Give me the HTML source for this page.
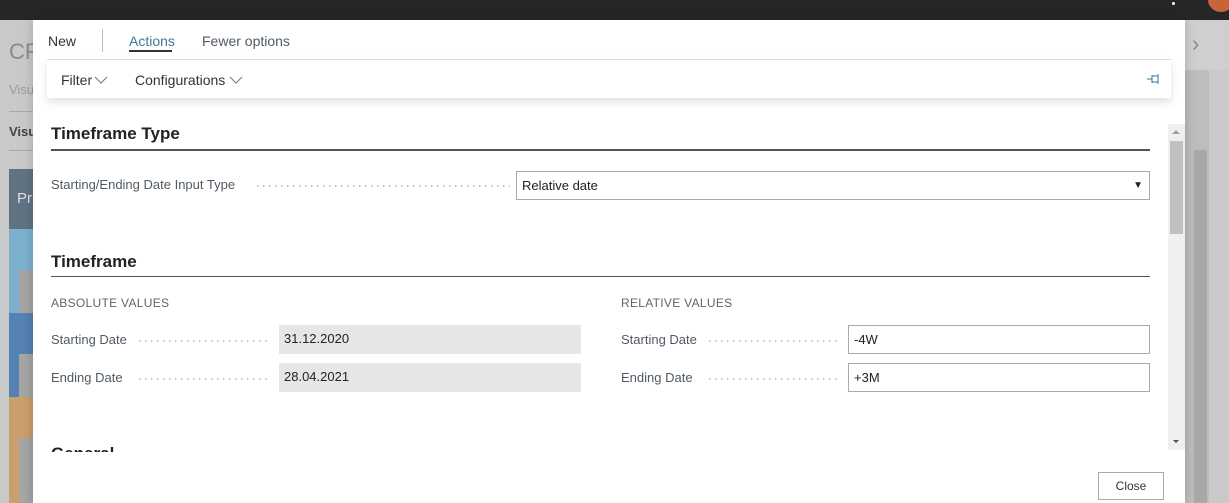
<!DOCTYPE html>
<html><head><meta charset="utf-8"><style>
*{margin:0;padding:0;box-sizing:border-box}
body{width:1229px;height:503px;overflow:hidden;position:relative;background:#c9c9c9;font-family:"Segoe UI","Liberation Sans",sans-serif;color:#333}
.a{position:absolute}
.t{position:absolute;white-space:nowrap;font-size:13px;line-height:16px}
.lbl{color:#505a64}
.dots{position:absolute;height:2px;background:repeating-linear-gradient(90deg,#c4c8cc 0 1.5px,transparent 1.5px 6px)}
.box{position:absolute;height:29px;font-size:13px;line-height:27px;padding-left:5px;color:#222}
</style></head><body>
<div class="a" style="left:0;top:0;width:1229px;height:20px;background:#262626"></div>
<div class="a" style="left:1208px;top:-12px;width:26px;height:24px;border-radius:50%;background:#c8633a"></div>
<div class="a" style="left:1172px;top:2px;width:3px;height:3px;background:#fff;border-radius:50%"></div>
<div class="t" style="left:9px;top:40px;font-size:22px;line-height:24px;color:#8a8a8a">CR</div>
<div class="t" style="left:9px;top:82px;color:#999">Visu</div>
<div class="a" style="left:9px;top:111px;width:24px;height:1px;background:#aaa"></div>
<div class="t" style="left:9px;top:124px;color:#444;font-weight:bold">Visu</div>
<div class="a" style="left:9px;top:150px;width:24px;height:1px;background:#aaa"></div>
<div class="a" style="left:9px;top:169px;width:24px;height:60px;background:#5f7384"></div>
<div class="t" style="left:17px;top:191px;color:#ddd;font-size:15px">Pr</div>
<div class="a" style="left:9px;top:229px;width:24px;height:84px;background:#7cb0cc"></div>
<div class="a" style="left:19px;top:270px;width:14px;height:43px;background:#a5a5a5"></div>
<div class="a" style="left:9px;top:313px;width:24px;height:84px;background:#5482b2"></div>
<div class="a" style="left:19px;top:354px;width:14px;height:43px;background:#a5a5a5"></div>
<div class="a" style="left:9px;top:397px;width:24px;height:106px;background:#c99f6c"></div>
<div class="a" style="left:19px;top:438px;width:14px;height:65px;background:#a5a5a5"></div>
<div class="a" style="left:1185px;top:20px;width:24px;height:483px;background:#bdbdbd"></div>
<div class="a" style="left:1194px;top:150px;width:13px;height:353px;background:#a8a8a8"></div>
<div class="a" style="left:1185px;top:20px;width:44px;height:50px;background:#cfcfcf"></div>
<div class="t" style="left:1192px;top:36px;font-size:22px;color:#888">&#x203A;</div>
<div class="a" style="left:33px;top:20px;width:1152px;height:483px;background:#fff;box-shadow:0 0 10px rgba(0,0,0,.2)"></div>
<div class="t" style="left:48px;top:33px;font-size:14px;color:#333">New</div>
<div class="a" style="left:102px;top:29px;width:1px;height:23px;background:#bbb"></div>
<div class="t" style="left:129px;top:33px;font-size:14px;color:#3b7799">Actions</div>
<div class="a" style="left:129px;top:50px;width:43px;height:2px;background:#333"></div>
<div class="t" style="left:202px;top:33px;font-size:14px;color:#505a64">Fewer options</div>
<div class="a" style="left:47px;top:59px;width:1124px;height:39px;background:#fff;border-top:1px solid #ddd;box-shadow:0 4px 8px rgba(0,0,0,.12)"></div>
<div class="t" style="left:61px;top:72px;font-size:14px;color:#333">Filter</div>
<svg class="a" style="left:94px;top:76px" width="14" height="8"><path d="M1 1L7 7L13 1" fill="none" stroke="#777"/></svg>
<div class="t" style="left:135px;top:72px;font-size:14px;color:#333">Configurations</div>
<svg class="a" style="left:229px;top:76px" width="14" height="8"><path d="M1 1L7 7L13 1" fill="none" stroke="#777"/></svg>
<svg class="a" style="left:1146px;top:73px" width="18" height="12"><path d="M1 6H6M6 2V10M6 3H12L12 9H6M12 1V11" fill="none" stroke="#3b7799"/></svg>
<div class="a" style="left:33px;top:110px;width:1135px;height:342px;overflow:hidden">
<div class="t" style="left:18px;top:14px;font-size:17px;line-height:20px;font-weight:600;color:#222">Timeframe Type</div>
<div class="a" style="left:18px;top:39px;width:1099px;height:2px;background:#4a5560"></div>
<div class="t lbl" style="left:18px;top:67px">Starting/Ending Date Input Type</div>
<div class="dots" style="left:224px;top:75px;width:253px"></div>
<div class="box" style="left:483px;top:61px;width:634px;border:1px solid #aaa">Relative date<span style="position:absolute;right:6px;font-size:10px">&#9660;</span></div>
<div class="t" style="left:18px;top:142px;font-size:17px;line-height:20px;font-weight:600;color:#222">Timeframe</div>
<div class="a" style="left:18px;top:166px;width:1099px;height:1px;background:#4a5560"></div>
<div class="t" style="left:18px;top:185px;font-size:12px;color:#5b6670;letter-spacing:.3px">ABSOLUTE VALUES</div>
<div class="t lbl" style="left:18px;top:222px">Starting Date</div>
<div class="dots" style="left:106px;top:230px;width:132px"></div>
<div class="box" style="left:246px;top:215px;width:302px;background:#e6e6e6">31.12.2020</div>
<div class="t lbl" style="left:18px;top:260px">Ending Date</div>
<div class="dots" style="left:106px;top:268px;width:132px"></div>
<div class="box" style="left:246px;top:253px;width:302px;background:#e6e6e6">28.04.2021</div>
<div class="t" style="left:588px;top:185px;font-size:12px;color:#5b6670;letter-spacing:.3px">RELATIVE VALUES</div>
<div class="t lbl" style="left:588px;top:222px">Starting Date</div>
<div class="dots" style="left:676px;top:230px;width:130px"></div>
<div class="box" style="left:815px;top:215px;width:302px;border:1px solid #aaa">-4W</div>
<div class="t lbl" style="left:588px;top:260px">Ending Date</div>
<div class="dots" style="left:676px;top:268px;width:130px"></div>
<div class="box" style="left:815px;top:253px;width:302px;border:1px solid #aaa">+3M</div>
<div class="t" style="left:18px;top:334px;font-size:17px;line-height:20px;font-weight:600;color:#222">General</div>
</div>
<div class="a" style="left:1168px;top:124px;width:17px;height:326px;background:#f0f0f0"></div>
<div class="a" style="left:1170px;top:141px;width:13px;height:93px;background:#c1c1c1"></div>
<div class="a" style="left:1172px;top:130px;border:4px solid transparent;border-bottom:4px solid #a0a0a0;border-top:0"></div>
<div class="a" style="left:1173px;top:440px;border:3px solid transparent;border-top:3px solid #505050;border-bottom:0"></div>
<div class="a" style="left:1098px;top:472px;width:66px;height:28px;border:1px solid #aaa;font-size:12px;line-height:26px;text-align:center;color:#333;background:#fff">Close</div>
</body></html>
